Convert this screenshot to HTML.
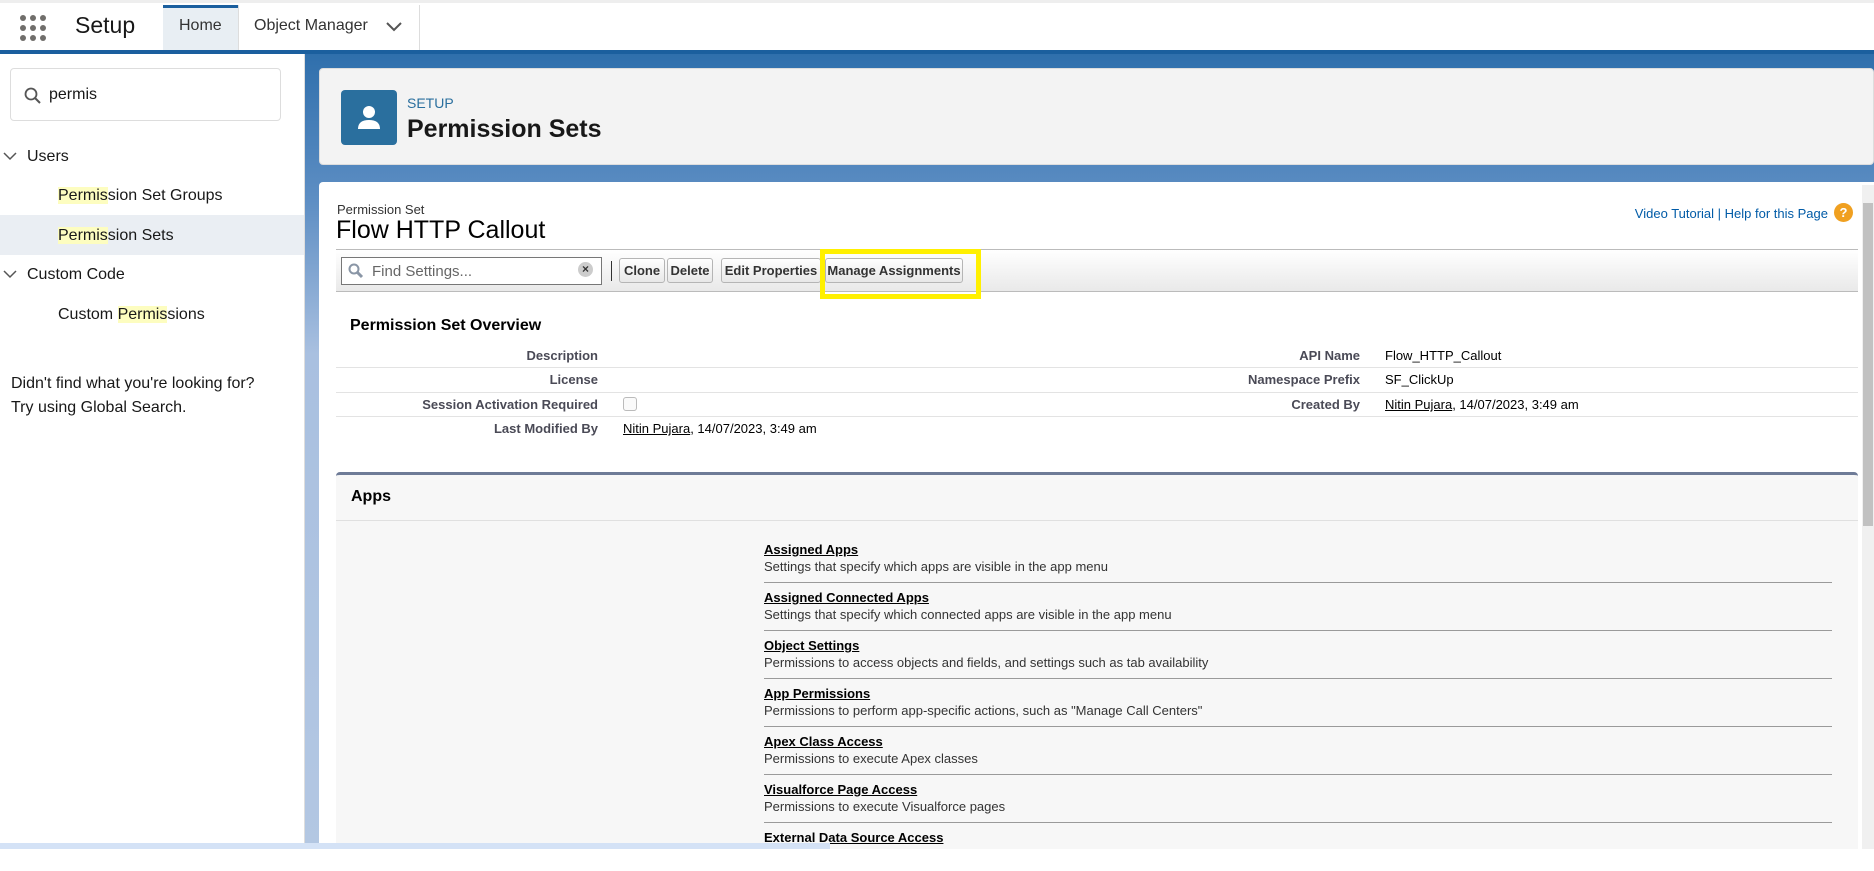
<!DOCTYPE html>
<html><head><meta charset="utf-8"><style>
*{box-sizing:border-box;margin:0;padding:0}
body{width:1874px;height:849px;overflow:hidden;font-family:"Liberation Sans",Arial,sans-serif;background:#fff;position:relative;color:#181818}
.a{position:absolute}
.hl{background:#fdfdc0}
.lbl{position:absolute;text-align:right;font-size:13px;font-weight:bold;color:#4a4a56}
.val{position:absolute;font-size:13px;color:#000}
.line{position:absolute;height:1px;background:#e3e3e3}
.btn{position:absolute;top:258px;height:25px;border:1px solid #b5b5b5;border-radius:3px;background:linear-gradient(#fff,#e8e8e8);font-size:13px;font-weight:bold;color:#333;text-align:center;line-height:23px}
.it{position:absolute;left:764px;width:1068px;border-bottom:1px solid #9a9a9a;height:48px}
.it b{display:block;font-size:13px;text-decoration:underline;color:#000;margin-top:7px}
.it span{display:block;font-size:13px;color:#333;margin-top:2px}
</style></head><body>
<!-- top bar -->
<div class="a" style="left:0;top:0;width:1874px;height:3px;background:#eee"></div>
<div class="a" style="left:0;top:50px;width:1874px;height:4px;background:#1b5f9e"></div>
<svg class="a" style="left:20px;top:15px" width="28" height="26"><g fill="#706e6b">
<circle cx="3" cy="3" r="3"/><circle cx="13" cy="3" r="3"/><circle cx="23" cy="3" r="3"/>
<circle cx="3" cy="13" r="3"/><circle cx="13" cy="13" r="3"/><circle cx="23" cy="13" r="3"/>
<circle cx="3" cy="23" r="3"/><circle cx="13" cy="23" r="3"/><circle cx="23" cy="23" r="3"/></g></svg>
<div class="a" style="left:75px;top:12px;font-size:23px;color:#181818">Setup</div>
<div class="a" style="left:163px;top:5px;width:75px;height:45px;background:#e8eef3;border-top:3px solid #1b5f9e"></div>
<div class="a" style="left:179px;top:17px;font-size:16px;color:#333">Home</div>
<div class="a" style="left:238px;top:5px;width:1px;height:45px;background:#ddd"></div>
<div class="a" style="left:254px;top:17px;font-size:16px;color:#333">Object Manager</div>
<svg class="a" style="left:386px;top:22px" width="16" height="10"><path d="M1 1 L8 8 L15 1" stroke="#555" stroke-width="2" fill="none"/></svg>
<div class="a" style="left:419px;top:5px;width:1px;height:45px;background:#ddd"></div>
<!-- sidebar -->
<div class="a" style="left:0;top:54px;width:305px;height:795px;background:#fff;border-right:1px solid #ddd"></div>
<div class="a" style="left:10px;top:68px;width:271px;height:53px;border:1px solid #ddd;border-radius:4px"></div>
<svg class="a" style="left:24px;top:87px" width="18" height="18"><circle cx="7" cy="7" r="5.5" stroke="#555" stroke-width="1.8" fill="none"/><path d="M11 11 L16 16" stroke="#555" stroke-width="2"/></svg>
<div class="a" style="left:49px;top:86px;font-size:16px;color:#181818">permis</div>
<svg class="a" style="left:3px;top:152px" width="14" height="9"><path d="M1 1 L7 7 L13 1" stroke="#555" stroke-width="1.5" fill="none"/></svg>
<div class="a" style="left:27px;top:148px;font-size:16px;color:#181818">Users</div>
<div class="a" style="left:58px;top:187px;font-size:16px;color:#181818"><span class="hl">Permis</span>sion Set Groups</div>
<div class="a" style="left:0;top:215px;width:304px;height:40px;background:#eaeef3"></div>
<div class="a" style="left:58px;top:227px;font-size:16px;color:#181818"><span class="hl">Permis</span>sion Sets</div>
<svg class="a" style="left:3px;top:270px" width="14" height="9"><path d="M1 1 L7 7 L13 1" stroke="#555" stroke-width="1.5" fill="none"/></svg>
<div class="a" style="left:27px;top:266px;font-size:16px;color:#181818">Custom Code</div>
<div class="a" style="left:58px;top:306px;font-size:16px;color:#181818">Custom <span class="hl">Permis</span>sions</div>
<div class="a" style="left:11px;top:372px;font-size:16px;color:#181818;line-height:24px">Didn't find what you're looking for?<br>Try using Global Search.</div>
<!-- main bg -->
<div class="a" style="left:305px;top:54px;width:1569px;height:795px;background:linear-gradient(#2f6fac 0px,#5f8fc4 150px,#a9c0e0 300px,#b3c7e2 795px)"></div>
<div class="a" style="left:319px;top:68px;width:1555px;height:97px;background:#f3f3f3;border-radius:4px;border:1px solid #ddd"></div>
<div class="a" style="left:341px;top:90px;width:56px;height:55px;background:#2a6f9e;border-radius:4px"></div>
<svg class="a" style="left:354px;top:103px" width="30" height="30"><circle cx="15" cy="9" r="6" fill="#fff"/><path d="M4 26 Q4 17 15 17 Q26 17 26 26 Z" fill="#fff"/></svg>
<div class="a" style="left:407px;top:95px;font-size:14px;color:#2a6f9e">SETUP</div>
<div class="a" style="left:407px;top:115px;font-size:25px;font-weight:bold;color:#181818">Permission Sets</div>
<!-- content -->
<div class="a" style="left:319px;top:182px;width:1555px;height:667px;background:#fff;border-radius:4px 0 0 0"></div>
<div class="a" style="left:1862px;top:185px;width:12px;height:664px;background:#f0f0f0"></div>
<div class="a" style="left:1863px;top:203px;width:10px;height:323px;background:#c1c1c1"></div>
<div class="a" style="left:337px;top:202px;font-size:13px;color:#333">Permission Set</div>
<div class="a" style="left:336px;top:216px;font-size:25px;color:#000">Flow HTTP Callout</div>
<div class="a" style="left:1560px;top:206px;font-size:13px;color:#015ba7;width:268px;text-align:right">Video Tutorial | Help for this Page</div>
<div class="a" style="left:1834px;top:203px;width:19px;height:19px;border-radius:50%;background:#f0a020;color:#fff;font-size:13px;font-weight:bold;text-align:center;line-height:19px">?</div>
<div class="a" style="left:336px;top:249px;width:1522px;height:43px;background:linear-gradient(#fff,#e9e9e9);border-top:1px solid #bbb;border-bottom:1px solid #bbb"></div>
<div class="a" style="left:341px;top:257px;width:261px;height:28px;border:1px solid #777;background:#fff"></div>
<svg class="a" style="left:348px;top:263px" width="16" height="16"><circle cx="6" cy="6" r="4.5" stroke="#8a96a6" stroke-width="2" fill="none"/><path d="M9.5 9.5 L14 14" stroke="#8a96a6" stroke-width="3"/></svg>
<div class="a" style="left:372px;top:263px;font-size:15px;color:#666">Find Settings...</div>
<div class="a" style="left:578px;top:262px;width:15px;height:15px;border-radius:50%;background:#ccc;color:#333;font-size:12px;font-weight:bold;text-align:center;line-height:15px">×</div>
<div class="a" style="left:611px;top:261px;width:1px;height:20px;background:#333"></div>
<div class="btn" style="left:619px;width:46px">Clone</div>
<div class="btn" style="left:667px;width:46px">Delete</div>
<div class="btn" style="left:721px;width:100px">Edit Properties</div>
<div class="btn" style="left:825px;width:138px">Manage Assignments</div>
<div class="a" style="left:820px;top:249px;width:161px;height:50px;border:5px solid #fff000"></div>
<div class="a" style="left:350px;top:317px;font-size:16px;font-weight:bold;color:#000">Permission Set Overview</div>
<div class="lbl" style="left:336px;top:348px;width:262px">Description</div>
<div class="lbl" style="left:336px;top:372px;width:262px">License</div>
<div class="lbl" style="left:336px;top:397px;width:262px">Session Activation Required</div>
<div class="a" style="left:623px;top:397px;width:14px;height:14px;border:1px solid #bbb;border-radius:3px;background:#fafafa"></div>
<div class="lbl" style="left:336px;top:421px;width:262px">Last Modified By</div>
<div class="val" style="left:623px;top:421px"><u>Nitin Pujara</u>, 14/07/2023, 3:49 am</div>
<div class="lbl" style="left:1100px;top:348px;width:260px">API Name</div>
<div class="val" style="left:1385px;top:348px">Flow_HTTP_Callout</div>
<div class="lbl" style="left:1100px;top:372px;width:260px">Namespace Prefix</div>
<div class="val" style="left:1385px;top:372px">SF_ClickUp</div>
<div class="lbl" style="left:1100px;top:397px;width:260px">Created By</div>
<div class="val" style="left:1385px;top:397px"><u>Nitin Pujara</u>, 14/07/2023, 3:49 am</div>
<div class="line" style="left:336px;top:367px;width:1522px"></div>
<div class="line" style="left:336px;top:392px;width:1522px"></div>
<div class="line" style="left:336px;top:416px;width:1522px"></div>
<!-- apps -->
<div class="a" style="left:336px;top:472px;width:1522px;height:377px;background:#f7f7f7;border-top:3px solid #6e7b97;border-radius:4px 4px 0 0"></div>
<div class="a" style="left:336px;top:520px;width:1522px;height:1px;background:#e0e0e0"></div>
<div class="a" style="left:351px;top:488px;font-size:16px;font-weight:bold;color:#000">Apps</div>
<div class="it" style="top:535px"><b>Assigned Apps</b><span>Settings that specify which apps are visible in the app menu</span></div>
<div class="it" style="top:583px"><b>Assigned Connected Apps</b><span>Settings that specify which connected apps are visible in the app menu</span></div>
<div class="it" style="top:631px"><b>Object Settings</b><span>Permissions to access objects and fields, and settings such as tab availability</span></div>
<div class="it" style="top:679px"><b>App Permissions</b><span>Permissions to perform app-specific actions, such as "Manage Call Centers"</span></div>
<div class="it" style="top:727px"><b>Apex Class Access</b><span>Permissions to execute Apex classes</span></div>
<div class="it" style="top:775px"><b>Visualforce Page Access</b><span>Permissions to execute Visualforce pages</span></div>
<div class="it" style="top:823px;border:none"><b>External Data Source Access</b></div>
<div class="a" style="left:0;top:843px;width:830px;height:6px;background:#d4e2f6"></div>
</body></html>
